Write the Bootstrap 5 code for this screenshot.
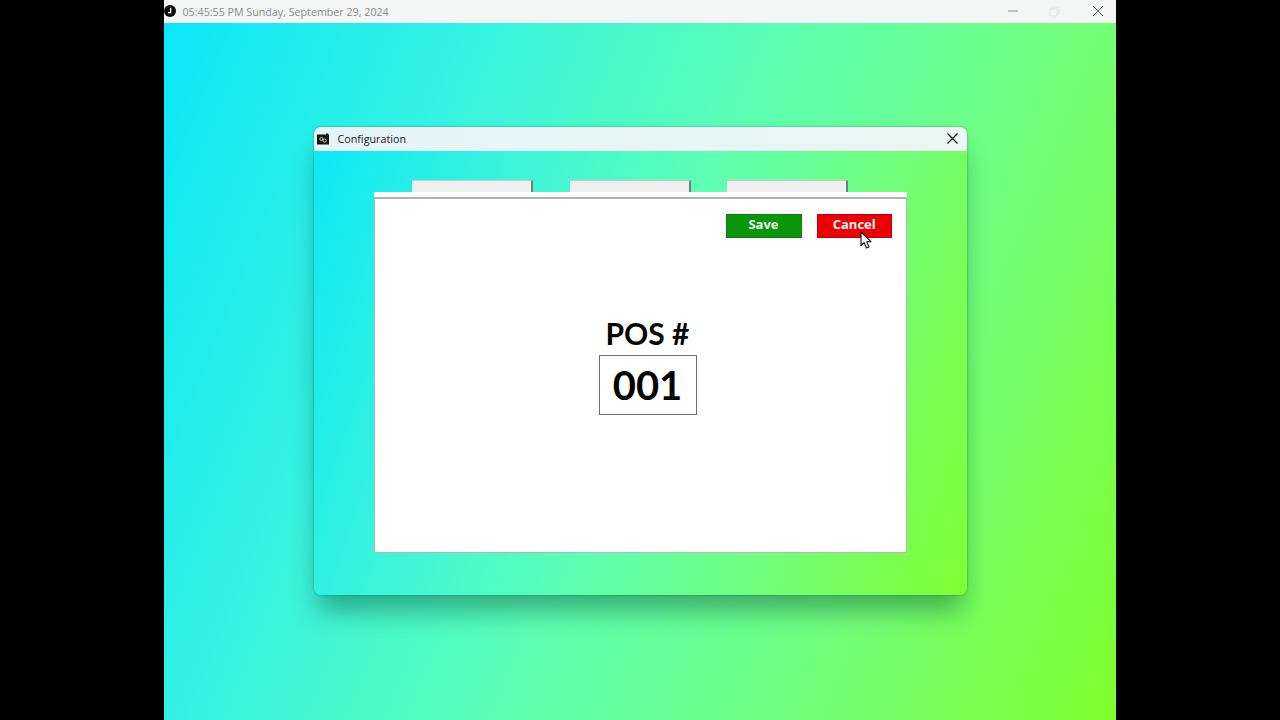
<!DOCTYPE html>
<html lang="en">
<head>
<meta charset="utf-8">
<title>Configuration</title>
<link href="https://cdn.jsdelivr.net/npm/bootstrap@5.3.0/dist/css/bootstrap.min.css" rel="stylesheet">
<style>
html,body{height:720px;overflow:hidden;background:#000;}
.screen-wrap{width:952px;height:720px;margin-left:164px;}
.app-bar{height:22.5px;background:#f4f5f5;font:10.7px/22px "Open Sans",sans-serif;color:#8b8b8b;}
.app-clock{width:12px;height:12px;}
.app-time{margin-left:6.5px;padding-top:2px;}
.ctl{height:22px;}
.ctl-min{width:30px;}
.ctl-max{width:52px;}
.ctl-cls{width:36px;}
.desk{height:697.5px;background:linear-gradient(112deg,#0ce7f8 0%,#35f2e2 25%,#5cffb4 50%,#72ff7c 74%,#7fff2c 100%);padding:104.5px 0 0 150px;}
.dlg{width:653px;height:468px;border-radius:7px;overflow:hidden;background:linear-gradient(108deg,#0ae8f8 0%,#3ff5d8 28%,#5cffb4 50%,#72ff7c 74%,#7fff30 100%);box-shadow:0 0 2px rgba(0,70,60,.6),0 20px 26px -4px rgba(0,70,50,.42);}
.dlg-wrap{width:653px;}
.dlg-head{height:23.5px;background:linear-gradient(90deg,#e6f4f6,#ecf6f4);font:10.75px/23px "Open Sans",sans-serif;color:#1b1b1b;}
.dlg-ico{margin-left:3px;margin-right:8.5px;}
.dlg-title{padding-top:1px;}
.dlg-x{margin-right:9px;}
.dlg-body{padding:29.5px 60px 0 60px;}
.tab-row{height:12px;padding-left:38px;gap:36.7px;}
.tab-blank{width:121px;height:12px;background:#efefef;border-top:1px solid #c4cbc8;border-right:2px solid #6f7f7a;}
.panel{width:533px;height:361px;background:#fff;padding-top:5px;position:relative;}
.panel-in{height:356px;border:1px solid #b3b7b5;border-top:2px solid #b0b4b2;padding:15px 14px 0 0;}
.act{height:24px;border:0;border-radius:0;padding:0 0 5px;font:700 13px/20px "Open Sans",sans-serif;color:#f0f4f0;box-shadow:inset 0 0 0 1px rgba(0,0,0,.14);}
.act-save{width:76px;background:#0a960c;margin-right:15px;}
.act-cancel{width:75.5px;background:#ec0008;}
.pos-block{padding-top:77px;padding-left:28px;}
.pos-label{font:700 30px/36px Lato,"Liberation Sans",sans-serif;color:#050505;margin-bottom:4px;}
.pos-box{width:98px;height:60px;border:1px solid #6e6e6e;font:700 40px/59px Lato,"Liberation Sans",sans-serif;color:#050505;}
.cursor-mark{position:absolute;left:485.5px;top:38.5px;}
</style>
</head>
<body>
<div class="screen-wrap">
  <div class="app-bar d-flex align-items-center">
    <svg class="app-clock" viewBox="0 0 12 12"><circle cx="6" cy="6" r="6" fill="#0b0b0b"/><path d="M6.6 2.8V7.6H4" fill="none" stroke="#fff" stroke-width="1.3"/></svg>
    <span class="app-time">05:45:55 PM Sunday, September 29, 2024</span>
    <div class="ms-auto d-flex">
      <div class="ctl ctl-min d-flex align-items-center justify-content-center"><svg width="10" height="10" viewBox="0 0 10 10"><path d="M0 5H10" stroke="#8a8a8a" stroke-width="1"/></svg></div>
      <div class="ctl ctl-max d-flex align-items-center justify-content-center"><svg width="11" height="11" viewBox="0 0 11 11"><path d="M1 3H8V10H1ZM3 3V1H10V8H8" fill="none" stroke="#e3e3e3" stroke-width="1"/></svg></div>
      <div class="ctl ctl-cls d-flex align-items-center justify-content-center"><svg width="12" height="12" viewBox="0 0 12 12"><path d="M1 1L11 11M11 1L1 11" stroke="#6c6c6c" stroke-width="1"/></svg></div>
    </div>
  </div>
  <div class="desk">
    <div class="dlg-wrap">
      <div class="dlg">
        <div class="dlg-head d-flex align-items-center">
          <svg class="dlg-ico" width="12" height="12" viewBox="0 0 12 12"><path d="M0 1.5H9L9 0.5H11L12 2V11.5H0Z" fill="#151515"/><circle cx="4.4" cy="6" r="1.6" fill="none" stroke="#ddd" stroke-width=".9"/><circle cx="7.6" cy="7.6" r="1.6" fill="none" stroke="#ddd" stroke-width=".9"/></svg>
          <span class="dlg-title">Configuration</span>
          <svg class="dlg-x ms-auto" width="11" height="11" viewBox="0 0 11 11"><path d="M.5 .5L10.5 10.5M10.5 .5L.5 10.5" stroke="#111" stroke-width="1.2"/></svg>
        </div>
        <div class="dlg-body">
          <div class="tab-row d-flex">
            <div class="tab-blank"></div>
            <div class="tab-blank"></div>
            <div class="tab-blank"></div>
          </div>
          <div class="panel">
            <div class="panel-in">
              <div class="d-flex justify-content-end">
                <button class="btn act act-save" type="button">Save</button>
                <button class="btn act act-cancel" type="button">Cancel</button>
              </div>
              <div class="pos-block d-flex flex-column align-items-center">
                <div class="pos-label">POS #</div>
                <div class="pos-box text-center">001</div>
              </div>
            </div>
            <svg class="cursor-mark" width="13" height="19" viewBox="0 0 13 19"><path d="M1 1V14.5L4.2 11.6L6.4 17L9 15.9L6.7 10.7H11Z" fill="#fff" stroke="#111" stroke-width="1.1" stroke-linejoin="round"/></svg>
          </div>
        </div>
      </div>
    </div>
  </div>
</div>
<script src="https://cdn.jsdelivr.net/npm/bootstrap@5.3.0/dist/js/bootstrap.bundle.min.js"></script>
</body>
</html>
